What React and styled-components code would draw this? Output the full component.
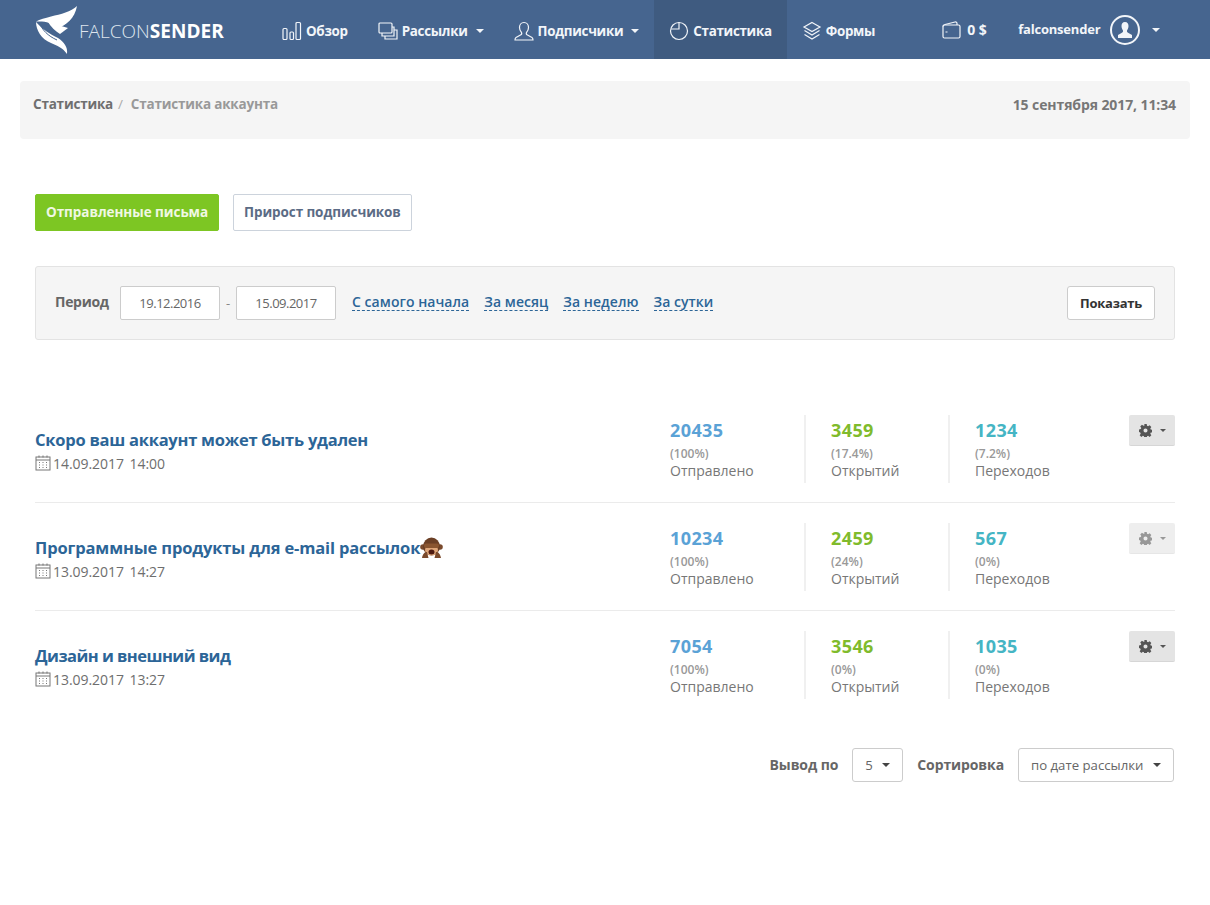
import React from "react";
import styled, { createGlobalStyle } from "styled-components";

const Global = createGlobalStyle`
  html, body { margin: 0; padding: 0; background: #fff; }
  body { font-family: "Open Sans", "Liberation Sans", sans-serif; color: #666; }
  * { box-sizing: border-box; }
`;

const Page = styled.div`
  width: 1210px;
  height: 905px;
  overflow: hidden;
`;

// Верхнее меню
const Nav = styled.header`
  display: flex;
  align-items: stretch;
  height: 59px;
  background: #46658f;
  color: #f2f5f9;
`;

const Logo = styled.div`
  display: flex;
  align-items: center;
  width: 267px;
  padding-left: 35px;
  flex-shrink: 0;
`;

const LogoText = styled.span`
  margin-top: 3px;
  font-size: 19px;
  font-weight: 300;
  letter-spacing: 0;
  color: #dfe5ee;
  b { font-weight: 700; color: #fff; letter-spacing: 0.05px; }
`;

const NavItem = styled.a`
  display: flex;
  align-items: center;
  gap: 4px;
  padding: 2px 15px 0;
  font-size: 13.4px;
  font-weight: 700;
  letter-spacing: -0.3px;
  white-space: nowrap;
  background: ${(p) => (p.$active ? "#3f5b80" : "transparent")};
`;

const Caret = styled.i`
  display: inline-block;
  width: 0;
  height: 0;
  margin-left: ${(p) => p.$gap ?? 4}px;
  border-top: ${(p) => p.$s || 4}px solid ${(p) => p.$color || "currentColor"};
  border-left: ${(p) => p.$s || 4}px solid transparent;
  border-right: ${(p) => p.$s || 4}px solid transparent;
`;

const NavRight = styled.div`
  display: flex;
  align-items: center;
  margin-left: 52px;
`;

const Balance = styled.span`
  display: flex;
  align-items: center;
  gap: 5px;
  width: 76px;
  font-size: 14px;
  font-weight: 700;
`;

const UserName = styled.span`
  font-size: 13px;
  font-weight: 700;
  letter-spacing: -0.2px;
  margin-bottom: 2px;
`;

const Avatar = styled.span`
  display: flex;
  align-items: center;
  justify-content: center;
  width: 30px;
  height: 30px;
  margin: 0 12px 0 10px;
  border: 2px solid #f2f5f9;
  border-radius: 50%;
`;

// Хлебные крошки
const Crumbs = styled.div`
  display: flex;
  justify-content: space-between;
  height: 58px;
  margin: 22px 20px 0;
  padding: 14px 14px 0 13px;
  background: #f5f5f5;
  border-radius: 4px;
  font-size: 13.5px;
  font-weight: 700;
  color: #999;
  letter-spacing: -0.2px;
`;

const CrumbRoot = styled.span`
  color: #6f6f6f;
`;

const CrumbSep = styled.span`
  margin: 0 8px 0 5px;
  font-weight: 400;
  color: #aaa;
`;

const CrumbDate = styled.span`
  color: #777;
  font-size: 14px;
  letter-spacing: -0.1px;
`;

const Content = styled.main`
  padding: 55px 35px 0;
`;

const Tabs = styled.div`
  display: flex;
  gap: 14px;
`;

const Tab = styled.button`
  height: 37px;
  padding: 0 10px 2px;
  font: 700 13.5px "Open Sans", sans-serif;
  letter-spacing: ${(p) => (p.$active ? "-0.05px" : "-0.1px")};
  border-radius: 2px;
  border: 1px solid ${(p) => (p.$active ? "#7dc623" : "#ccd3dc")};
  background: ${(p) => (p.$active ? "#7dc623" : "#fff")};
  color: ${(p) => (p.$active ? "#f0f8e4" : "#5b6b85")};
`;

const Filter = styled.section`
  display: flex;
  align-items: center;
  height: 74px;
  margin-top: 35px;
  padding: 0 19px;
  background: #f5f5f5;
  border: 1px solid #e3e3e3;
  border-radius: 3px;
`;

const FilterLabel = styled.span`
  width: 65px;
  font-size: 14px;
  font-weight: 700;
  color: #666;
  letter-spacing: -0.3px;
  margin-bottom: 3px;
`;

const DateInput = styled.div`
  display: flex;
  align-items: center;
  justify-content: center;
  width: 100px;
  height: 34px;
  background: #fff;
  border: 1px solid #ccc;
  border-radius: 2px;
  font-size: 13px;
  letter-spacing: -0.5px;
  color: #666;
`;

const Dash = styled.span`
  width: 16px;
  text-align: center;
  font-size: 13px;
  color: #888;
`;

const Presets = styled.div`
  display: flex;
  gap: 15px;
  margin-left: 16px;
  margin-top: -2px;
`;

const Preset = styled.a`
  font-size: 14px;
  font-weight: 600;
  line-height: 17px;
  letter-spacing: 0.05px;
  color: #2c6597;
  border-bottom: 1px dashed #2c6597;
`;

const ShowButton = styled.button`
  margin-left: auto;
  width: 88px;
  height: 34px;
  background: #fff;
  border: 1px solid #ccc;
  border-radius: 3px;
  font: 700 13px "Open Sans", sans-serif;
  letter-spacing: -0.25px;
  color: #333;
`;

const List = styled.div`
  margin-top: 55px;
`;

const Row = styled.article`
  display: flex;
  height: 108px;
  padding-top: 20px;
  border-bottom: ${(p) => (p.$last ? "none" : "1px solid #ebebeb")};
`;

const RowInfo = styled.div`
  width: 635px;
  padding-top: 13px;
`;

const RowTitle = styled.h3`
  display: flex;
  align-items: center;
  margin: 0;
  height: 22px;
  font-size: 16.5px;
  font-weight: 700;
  letter-spacing: ${(p) => p.$ls}px;
  color: #2c6597;
`;

const RowDate = styled.div`
  display: flex;
  align-items: center;
  gap: 2px;
  height: 22px;
  margin-top: 2px;
  font-size: 14px;
  letter-spacing: -0.05px;
  color: #6e6e6e;
  word-spacing: 2px;
`;

const Stat = styled.div`
  width: ${(p) => p.$w}px;
  height: 68px;
  margin-right: ${(p) => p.$mr || 0}px;
  border-right: ${(p) => (p.$divider ? "2px solid #f0f0f0" : "none")};
`;

const StatValue = styled.div`
  height: 31px;
  font-size: 18px;
  font-weight: 700;
  line-height: 31px;
  letter-spacing: 0.4px;
  color: ${(p) => p.$color};
`;

const StatPct = styled.div`
  height: 15px;
  font-size: 12px;
  font-weight: 600;
  line-height: 15px;
  color: #999;
`;

const StatLabel = styled.div`
  font-size: 14px;
  line-height: 20px;
  color: #777;
`;

const GearButton = styled.button`
  display: flex;
  align-items: center;
  justify-content: center;
  gap: 8px;
  width: 46px;
  height: 31px;
  margin-left: auto;
  padding: 0;
  background: #e4e4e4;
  border: none;
  border-bottom: 1px solid #d6d6d6;
  border-radius: 2px;
  opacity: ${(p) => (p.$disabled ? 0.6 : 1)};
  color: #555;
`;

const Footer = styled.div`
  display: flex;
  align-items: center;
  justify-content: flex-end;
  height: 34px;
  margin-top: 29px;
  margin-right: 1px;
`;

const FooterLabel = styled.span`
  margin: 0 14px 2px 14px;
  font-size: 14px;
  font-weight: 700;
  letter-spacing: -0.1px;
  color: #666;
`;

const Select = styled.div`
  display: flex;
  align-items: center;
  justify-content: space-between;
  width: ${(p) => p.$w}px;
  height: 34px;
  padding: 0 12px;
  background: #fff;
  border: 1px solid #ccc;
  border-radius: 3px;
  font-size: 13.2px;
  color: #666;
`;

const Wing = () => (
  <svg width="44" height="48" viewBox="0 0 44 48" fill="#fff">
    <path d="M42 0C36 6 26 8 16 10.500 10 12 5 13.500 1 15.500 9 15 17 16 22 22 31 20 40 12 42 0z" />
    <path d="M1 16C1 24 6 33 16 37 22 39.500 28 42 32 48 33 41 29 36 23 32 15 28 8 24 1 16z" />
    <path d="M4 16c3 8 9 14 18 18M8 16c3 6 8 11 15 14" fill="none" stroke="#46658f" strokeWidth="1" />
    <path d="M13 16c3 5 7 9 12 12l8-6" fill="#fff" />
  </svg>
);

const Line = ({ children, size = 20, w = 20, h = 20 }) => (
  <svg width={size} height={(size * h) / w} viewBox={`0 0 ${w} ${h}`} fill="none" stroke="currentColor" strokeWidth="1.2">
    {children}
  </svg>
);

const IconBars = () => (
  <Line>
    <rect x="1" y="7.500" width="4" height="11" rx="1" />
    <rect x="8" y="11" width="3.500" height="7.500" rx="1" />
    <rect x="14" y="1.500" width="4.500" height="17" rx="1" />
  </Line>
);

const IconCopy = () => (
  <Line>
    <rect x="1" y="2" width="13" height="10" rx="1" />
    <path d="M4 12v3h12V6h-2M7 15v3h12V9h-3" />
  </Line>
);

const IconUser = () => (
  <Line>
    <path d="M10 1.500c-3 0-4.500 2.500-4.500 5 0 2 1 4 2 5 .5 1 0 2-1 2.500L2 16.500c-.8.500-1 1-1 2.500h18c0-1.500-.2-2-1-2.500L13.500 14c-1-.5-1.500-1.500-1-2.500 1-1 2-3 2-5 0-2.500-1.500-5-4.500-5z" />
  </Line>
);

const IconPie = () => (
  <Line>
    <circle cx="10" cy="10" r="8.500" />
    <path d="M10 1.500V8H2.200" />
  </Line>
);

const IconLayers = () => (
  <Line>
    <path d="M10 1.500l8 4.500-8 4.500-8-4.500z" />
    <path d="M2.500 9.500L10 14l7.500-4.500M2.500 13.500L10 18l7.500-4.500" />
  </Line>
);

const IconWallet = () => (
  <Line>
    <rect x="1" y="5" width="17" height="13" rx="1.500" />
    <path d="M1 6.500c0-1 1-1.800 2-2L13 2c1.200-.2 2 .5 2 1.500V5M3.500 12h2" />
  </Line>
);

const IconPerson = () => (
  <svg width="16" height="18" viewBox="0 0 16 18" fill="#f2f5f9">
    <path d="M8 1c-2.500 0-3.500 2-3.500 4 0 2 1 3.500 1.500 4.500.3 1-.3 2-1.500 2.500L1 14v3h14v-3l-3.500-2c-1.200-.5-1.800-1.500-1.500-2.500.5-1 1.500-2.500 1.500-4.500S10.500 1 8 1z" />
  </svg>
);

const IconCalendar = () => (
  <svg width="16" height="16" viewBox="0 0 16 16" fill="none" stroke="#777" strokeWidth="1">
    <rect x="1" y="2" width="14" height="13" />
    <path d="M1 5h14M4 .5v2M8 .5v2M12 .5v2" />
    <path d="M4 7.500h1M7.500 7.500h1M11 7.500h1M4 10h1M7.500 10h1M11 10h1M4 12.500h1M7.500 12.500h1M11 12.500h1" strokeWidth="1.200" />
  </svg>
);

const IconGear = () => (
  <svg width="13" height="13" viewBox="0 0 16 16" fill="#555">
    <path fillRule="evenodd" d="M6.500 0h3l.4 2.200 1.300.6L13.100 1.500l2.100 2.100-1.300 1.900.6 1.300 2.200.4v3l-2.200.4-.6 1.300 1.300 1.900-2.100 2.100-1.900-1.300-1.300.6-.4 2.200h-3l-.4-2.200-1.300-.6-1.900 1.300-2.100-2.100 1.300-1.900-.6-1.300L0 9.700v-3l2.200-.4.600-1.300-1.300-1.900 2.100-2.100 1.900 1.300 1.300-.6zM8 5.500a2.500 2.500 0 1 0 0 5 2.500 2.500 0 0 0 0-5z" />
  </svg>
);

const Monkey = () => (
  <svg width="23" height="21" viewBox="0 0 23 21">
    <circle cx="3" cy="10" r="2.800" fill="#7a4a2c" />
    <circle cx="20" cy="10" r="2.800" fill="#7a4a2c" />
    <ellipse cx="11.500" cy="9.500" rx="8.500" ry="9" fill="#6b3f25" />
    <ellipse cx="11.500" cy="13" rx="6.500" ry="5.500" fill="#dfa679" />
    <rect x="4" y="6.500" width="15" height="4.500" rx="2" fill="#8a5530" />
    <ellipse cx="11.500" cy="15" rx="3" ry="2.500" fill="#4e1a10" />
    <path d="M2 21c1-5 3-6 5-6l1.500 6zM21 21c-1-5-3-6-5-6l-1.500 6z" fill="#7a4a2c" />
  </svg>
);

const rows = [
  { title: "Скоро ваш аккаунт может быть удален", ls: -0.25, date: "14.09.2017 14:00", sent: "20435", open: "3459", openPct: "(17.4%)", click: "1234", clickPct: "(7.2%)" },
  { title: "Программные продукты для e-mail рассылок", ls: -0.15, date: "13.09.2017 14:27", sent: "10234", open: "2459", openPct: "(24%)", click: "567", clickPct: "(0%)", emoji: true, disabled: true },
  { title: "Дизайн и внешний вид", ls: -0.54, date: "13.09.2017 13:27", sent: "7054", open: "3546", openPct: "(0%)", click: "1035", clickPct: "(0%)" },
];

export default function App() {
  return (
    <Page>
      <Global />
      <Nav>
        <Logo>
          <Wing />
          <LogoText>FALCON<b>SENDER</b></LogoText>
        </Logo>
        <NavItem><IconBars />Обзор</NavItem>
        <NavItem><IconCopy />Рассылки<Caret /></NavItem>
        <NavItem><IconUser />Подписчики<Caret /></NavItem>
        <NavItem $active><IconPie />Статистика</NavItem>
        <NavItem><IconLayers />Формы</NavItem>
        <NavRight>
          <Balance><IconWallet />0 $</Balance>
          <UserName>falconsender</UserName>
          <Avatar><IconPerson /></Avatar>
          <Caret $gap={0} />
        </NavRight>
      </Nav>

      <Crumbs>
        <span><CrumbRoot>Статистика</CrumbRoot><CrumbSep>/</CrumbSep>Статистика аккаунта</span>
        <CrumbDate>15 сентября 2017, 11:34</CrumbDate>
      </Crumbs>

      <Content>
        <Tabs>
          <Tab $active>Отправленные письма</Tab>
          <Tab>Прирост подписчиков</Tab>
        </Tabs>

        <Filter>
          <FilterLabel>Период</FilterLabel>
          <DateInput>19.12.2016</DateInput>
          <Dash>-</Dash>
          <DateInput>15.09.2017</DateInput>
          <Presets>
            <Preset>С самого начала</Preset>
            <Preset>За месяц</Preset>
            <Preset>За неделю</Preset>
            <Preset>За сутки</Preset>
          </Presets>
          <ShowButton>Показать</ShowButton>
        </Filter>

        <List>
          {rows.map((r, i) => (
            <Row key={r.sent} $last={i === rows.length - 1}>
              <RowInfo>
                <RowTitle $ls={r.ls}>{r.title}{r.emoji && <Monkey />}</RowTitle>
                <RowDate><IconCalendar />{r.date}</RowDate>
              </RowInfo>
              <Stat $w={136} $mr={25} $divider>
                <StatValue $color="#5aa2d6">{r.sent}</StatValue>
                <StatPct>(100%)</StatPct>
                <StatLabel>Отправлено</StatLabel>
              </Stat>
              <Stat $w={119} $mr={25} $divider>
                <StatValue $color="#80bb2c">{r.open}</StatValue>
                <StatPct>{r.openPct}</StatPct>
                <StatLabel>Открытий</StatLabel>
              </Stat>
              <Stat $w={120}>
                <StatValue $color="#45b5c4">{r.click}</StatValue>
                <StatPct>{r.clickPct}</StatPct>
                <StatLabel>Переходов</StatLabel>
              </Stat>
              <GearButton $disabled={r.disabled}><IconGear /><Caret $gap={0} $s={3.5} /></GearButton>
            </Row>
          ))}
        </List>

        <Footer>
          <FooterLabel>Вывод по</FooterLabel>
          <Select $w={51}>5<Caret $gap={0} $color="#444" /></Select>
          <FooterLabel>Сортировка</FooterLabel>
          <Select $w={156}>по дате рассылки<Caret $gap={0} $color="#444" /></Select>
        </Footer>
      </Content>
    </Page>
  );
}
